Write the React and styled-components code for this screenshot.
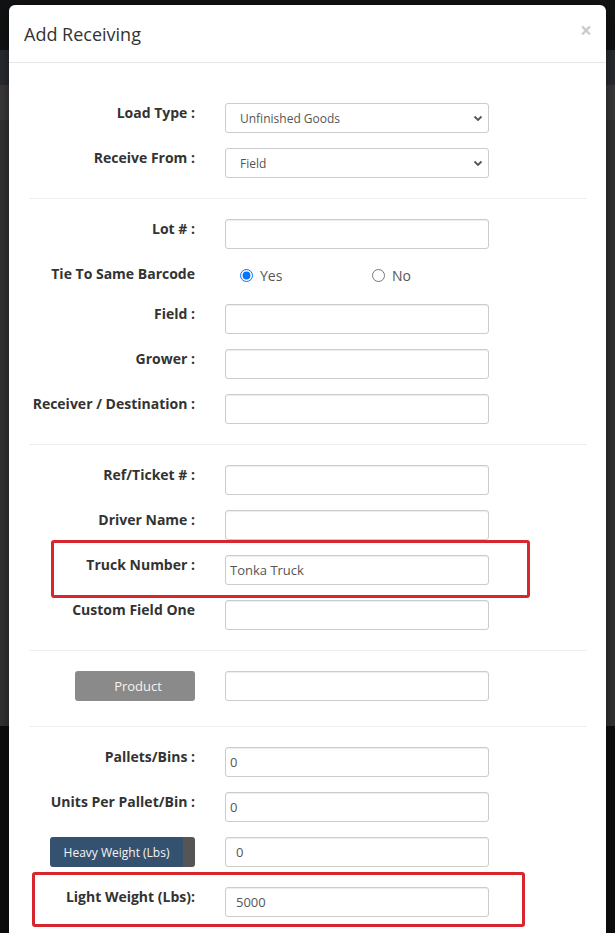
import React from 'react';
import styled, { createGlobalStyle } from 'styled-components';

const GlobalStyle = createGlobalStyle`
  html, body {
    margin: 0;
    padding: 0;
    height: 933px;
    overflow: hidden;
    background: #0e0e0e;
  }
  body {
    font-family: "Open Sans", "Liberation Sans", sans-serif;
    color: #333;
  }
  * { box-sizing: border-box; }
`;

const Screen = styled.div`
  position: relative;
  height: 933px;
  overflow: hidden;
`;

// the dimmed page sitting behind the modal
const Page = styled.div`
  height: 100%;
  display: flex;
  flex-direction: column;
`;

const Band = styled.div`
  flex: 0 0 ${p => p.$h}px;
  background: ${p => p.$bg};
`;

const Footer = styled.div`
  flex: 1;
  background: #0e0e0e;
`;

const Modal = styled.div`
  position: absolute;
  top: 5px;
  left: 9px;
  width: 597px;
  background: #fff;
  border-radius: 6px;
  box-shadow: 0 5px 15px rgba(0, 0, 0, 0.5);
`;

const Header = styled.div`
  height: 58px;
  padding: 0 14px 0 15px;
  display: flex;
  align-items: center;
  justify-content: space-between;
  border-bottom: 1px solid #e5e5e5;
`;

const Title = styled.h4`
  margin: 0;
  font-size: 18px;
  font-weight: 400;
  color: #333;
`;

const Close = styled.button`
  border: 0;
  background: none;
  padding: 0;
  margin-top: -6px;
  font-family: inherit;
  font-size: 21px;
  font-weight: 700;
  line-height: 1;
  color: #000;
  opacity: 0.2;
`;

const Body = styled.div`
  padding: 40px 19px 30px 20px;
  display: flex;
  flex-direction: column;
`;

const Section = styled.div`
  display: flex;
  flex-direction: column;
  gap: 15px;
`;

const Divider = styled.hr`
  border: 0;
  border-top: 1px solid #eee;
  margin: 20px 0;
`;

const Row = styled.div`
  position: relative;
  display: grid;
  grid-template-columns: 166px 264px;
  column-gap: 30px;
  min-height: ${p => (p.$tall ? 35 : 0)}px;
`;

const Label = styled.label`
  text-align: right;
  font-size: 14px;
  font-weight: 700;
  line-height: 18px;
  padding-top: 1px;
  color: #333;
  white-space: nowrap;
`;

const ButtonCell = styled.div`
  display: flex;
  justify-content: flex-end;
`;

const Input = styled.input`
  width: 100%;
  height: 30px;
  padding: 0 ${p => p.$pad || 4}px;
  border: 1px solid #ccc;
  border-radius: 3px;
  box-shadow: inset 0 1px 1px rgba(0, 0, 0, 0.075);
  font-family: inherit;
  font-size: 13px;
  color: #555;
  background: #fff;
  outline: none;
`;

const SelectWrap = styled.div`
  position: relative;
`;

const Select = styled.select`
  appearance: none;
  width: 100%;
  height: 30px;
  padding: 0 30px 0 14px;
  border: 1px solid #ccc;
  border-radius: 3px;
  font-family: inherit;
  font-size: 12px;
  color: #555;
  background: #fff;
  outline: none;
`;

const Chevron = styled.svg`
  position: absolute;
  right: 6px;
  top: 12px;
  pointer-events: none;
`;

const RadioGroup = styled.div`
  display: flex;
  height: 25px;
  padding: 1px 0 0 15px;
`;

const RadioOption = styled.label`
  flex: 0 0 132px;
  height: 20px;
  display: flex;
  align-items: center;
  font-size: 14px;
  color: #555;

  input {
    width: 13px;
    height: 13px;
    margin: 0 7px 0 0;
    accent-color: #0075ff;
  }
`;

const ActionButton = styled.button`
  height: 30px;
  width: ${p => p.$w}px;
  border: 0;
  border-radius: 3px;
  padding: 0 ${p => p.$padR || 0}px 0 ${p => p.$padL || 0}px;
  font-family: inherit;
  font-size: ${p => p.$size || 12}px;
  color: #f4f4f4;
  background: ${p => p.$bg};
`;

const Highlight = styled.span`
  position: absolute;
  top: ${p => p.$t}px;
  bottom: ${p => p.$b}px;
  left: ${p => p.$l}px;
  right: ${p => p.$r}px;
  border: 3px solid #d8262e;
  border-radius: 3px;
  pointer-events: none;
`;

const TextField = ({ label, value = '', pad, mark }) => (
  <Row>
    <Label>{label}</Label>
    <Input defaultValue={value} $pad={pad} />
    {mark && <Highlight {...mark} />}
  </Row>
);

const SelectField = ({ label, value }) => (
  <Row>
    <Label>{label}</Label>
    <SelectWrap>
      <Select defaultValue={value}>
        <option>{value}</option>
      </Select>
      <Chevron width="10" height="7" viewBox="0 0 10 7">
        <path d="M1.5 1.5 5 5l3.5-3.5" fill="none" stroke="#555" strokeWidth="1.8" />
      </Chevron>
    </SelectWrap>
  </Row>
);

export default function App() {
  return (
    <>
      <GlobalStyle />
      <Screen>
        <Page>
          <Band $h={50} $bg="#111213" />
          <Band $h={35} $bg="#282c30" />
          <Band $h={35} $bg="#3a3a3a" />
          <Band $h={606} $bg="#333333" />
          <Footer />
        </Page>

        <Modal>
          <Header>
            <Title>Add Receiving</Title>
            <Close>×</Close>
          </Header>
          <Body>
            <Section>
              <SelectField label="Load Type :" value="Unfinished Goods" />
              <SelectField label="Receive From :" value="Field" />
            </Section>
            <Divider />
            <Section>
              <TextField label="Lot # :" />
              <Row>
                <Label>Tie To Same Barcode</Label>
                <RadioGroup>
                  <RadioOption>
                    <input type="radio" name="tie" defaultChecked />
                    Yes
                  </RadioOption>
                  <RadioOption>
                    <input type="radio" name="tie" />
                    No
                  </RadioOption>
                </RadioGroup>
              </Row>
              <TextField label="Field :" />
              <TextField label="Grower :" />
              <TextField label="Receiver / Destination :" />
            </Section>
            <Divider />
            <Section>
              <TextField label="Ref/Ticket # :" />
              <TextField label="Driver Name :" />
              <TextField
                label="Truck Number :"
                value="Tonka Truck"
                mark={{ $t: -15, $b: -13, $l: 22, $r: 57 }}
              />
              <TextField label="Custom Field One" />
            </Section>
            <Divider />
            <Section>
              <Row $tall>
                <ButtonCell>
                  <ActionButton $w={120} $bg="#8a8a8a" $size={13} $padL={6}>
                    Product
                  </ActionButton>
                </ButtonCell>
                <Input />
              </Row>
            </Section>
            <Divider />
            <Section>
              <TextField label="Pallets/Bins :" value="0" />
              <TextField label="Units Per Pallet/Bin :" value="0" />
              <Row $tall>
                <ButtonCell>
                  <ActionButton
                    $w={145}
                    $padR={12}
                    $bg="linear-gradient(to right, #34526f 133px, #555 133px)"
                  >
                    Heavy Weight (Lbs)
                  </ActionButton>
                </ButtonCell>
                <Input defaultValue="0" $pad={10} />
              </Row>
              <TextField
                label="Light Weight (Lbs):"
                value="5000"
                pad={10}
                mark={{ $t: -15, $b: -10, $l: 3, $r: 62 }}
              />
            </Section>
          </Body>
        </Modal>
      </Screen>
    </>
  );
}
